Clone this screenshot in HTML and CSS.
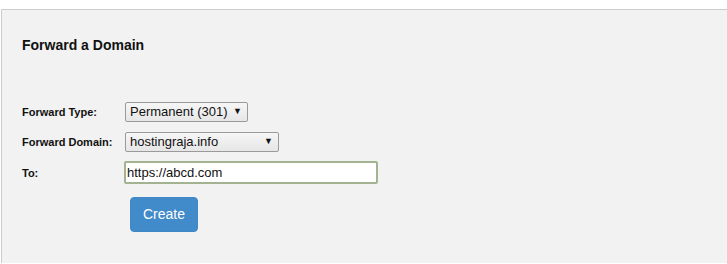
FILE: index.html
```html
<!DOCTYPE html>
<html lang="en">
<head>
    <meta charset="UTF-8">
    <title>Forward a Domain</title>
    <link rel="stylesheet" href="styles.css">
</head>
<body>
    <div class="panel">
        <h3>Forward a Domain</h3>

        <form class="forward-form">
            <label>Forward Type:</label>
            <span class="select-wrap type">
                <select>
                    <option>Permanent (301)</option>
                    <option>Temporary (302)</option>
                </select>
            </span>

            <label>Forward Domain:</label>
            <span class="select-wrap domain">
                <select>
                    <option>hostingraja.info</option>
                </select>
            </span>

            <label>To:</label>
            <input type="text" class="to-input" value="https://abcd.com">

            <span></span>
            <button type="button" class="btn-create">Create</button>
        </form>
    </div>
</body>
</html>
```

FILE: styles.css
```css
body {
    margin: 0;
    background: #ffffff;
    font-family: "Liberation Sans", Arial, sans-serif;
    color: #111;
}

.panel {
    margin: 9px 0 0 1px;
    border-top: 1px solid #cccccc;
    border-left: 1px solid #cccccc;
    background: #f2f2f2;
    height: 254px;
    padding: 0 0 0 20px;
    box-sizing: border-box;
}

h3 {
    margin: 0;
    padding-top: 27px;
    font-size: 14px;
    line-height: 17px;
    font-weight: bold;
}

.forward-form {
    display: grid;
    grid-template-columns: 103px auto;
    grid-template-rows: 21px 21px 23px 35px;
    row-gap: 9px;
    margin-top: 47px;
    align-items: center;
    justify-items: start;
}

.forward-form label {
    font-size: 11px;
    font-weight: bold;
}

/* select with the little black arrow */
.select-wrap {
    position: relative;
    display: inline-block;
    height: 20px;
}

.select-wrap select {
    appearance: none;
    -webkit-appearance: none;
    height: 20px;
    margin: 0;
    padding: 0 0 0 4px;
    font-family: "Liberation Sans", Arial, sans-serif;
    font-size: 13px;
    color: #111;
    border: 1px solid #9a9a9a;
    border-radius: 2px;
    background: linear-gradient(#f6f6f6, #e6e6e6);
    box-sizing: border-box;
}

.select-wrap::after {
    content: "\25BC";
    position: absolute;
    right: 6px;
    top: 4px;
    font-size: 9px;
    color: #111;
    pointer-events: none;
}

.select-wrap.type select {
    width: 123px;
}

.select-wrap.domain select {
    width: 154px;
}

.to-input {
    width: 254px;
    height: 23px;
    margin: 0 0 0 -1px;
    padding: 0 1px;
    font-family: "Liberation Sans", Arial, sans-serif;
    font-size: 13px;
    color: #111;
    border: 2px solid #a3b391;
    border-radius: 2px;
    background: #fff;
    box-sizing: border-box;
}

.btn-create {
    margin: 7px 0 0 5px;
    width: 68px;
    height: 35px;
    font-family: "Liberation Sans", Arial, sans-serif;
    font-size: 14px;
    color: #fff;
    background: #428bca;
    border: 1px solid #3f87c5;
    border-radius: 4px;
    cursor: pointer;
}
```
